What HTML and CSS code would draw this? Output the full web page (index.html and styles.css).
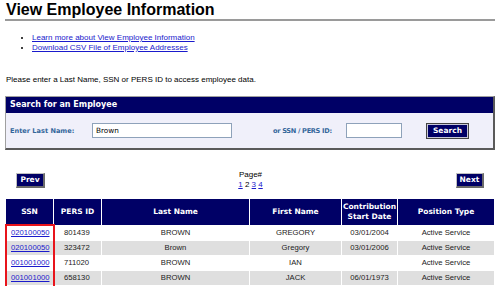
FILE: index.html
```html
<!DOCTYPE html>
<html lang="en">

<head>
    <meta charset="UTF-8">
    <title>View Employee Information</title>
    <link rel="stylesheet" href="styles.css">
</head>

<body>
    <!-- Page Title -->
    <h1 class="page-title">View Employee Information</h1>

    <!-- Help Links -->
    <ul class="help-links">
        <li><a href="#">Learn more about View Employee Information</a></li>
        <li><a href="#">Download CSV File of Employee Addresses</a></li>
    </ul>

    <p class="intro">Please enter a Last Name, SSN or PERS ID to access employee data.</p>

    <!-- Search Box -->
    <div class="search-box">
        <div class="search-header">Search for an Employee</div>
        <div class="search-body">
            <label class="search-label label-name" for="last-name">Enter Last Name:</label>
            <input class="search-input input-name" id="last-name" type="text" value="Brown">
            <label class="search-label label-id" for="pers-id">or SSN / PERS ID:</label>
            <input class="search-input input-id" id="pers-id" type="text">
            <button class="nav-btn search-btn">Search</button>
        </div>
    </div>

    <!-- Pager -->
    <div class="pager">
        <button class="nav-btn prev-btn">Prev</button>
        <div class="page-list">
            Page#<br>
            <a href="#">1</a> 2 <a href="#">3</a> <a href="#">4</a>
        </div>
        <button class="nav-btn next-btn">Next</button>
    </div>

    <!-- Results -->
    <div class="results">
        <table class="results-table">
            <thead>
                <tr>
                    <th class="col-ssn">SSN</th>
                    <th class="col-pers">PERS ID</th>
                    <th class="col-last">Last Name</th>
                    <th class="col-first">First Name</th>
                    <th class="col-date">Contribution<br>Start Date</th>
                    <th class="col-type">Position Type</th>
                </tr>
            </thead>
            <tbody>
                <tr>
                    <td class="cell-left"><a href="#">020100050</a></td>
                    <td class="cell-pers">801439</td>
                    <td>BROWN</td>
                    <td>GREGORY</td>
                    <td>03/01/2004</td>
                    <td>Active Service</td>
                </tr>
                <tr class="row-alt">
                    <td class="cell-left"><a href="#">020100050</a></td>
                    <td class="cell-pers">323472</td>
                    <td>Brown</td>
                    <td>Gregory</td>
                    <td>03/01/2006</td>
                    <td>Active Service</td>
                </tr>
                <tr>
                    <td class="cell-left"><a href="#">001001000</a></td>
                    <td class="cell-pers">711020</td>
                    <td>BROWN</td>
                    <td>IAN</td>
                    <td></td>
                    <td>Active Service</td>
                </tr>
                <tr class="row-alt">
                    <td class="cell-left"><a href="#">001001000</a></td>
                    <td class="cell-pers">658130</td>
                    <td>BROWN</td>
                    <td>JACK</td>
                    <td>06/01/1973</td>
                    <td>Active Service</td>
                </tr>
            </tbody>
        </table>
        <!-- SSN column highlight -->
        <div class="ssn-highlight"></div>
    </div>
</body>

</html>
```

FILE: styles.css
```css
body {
    margin: 0;
    padding: 0 5px;
    background-color: #ffffff;
    color: #000000;
    font-family: "Liberation Sans", Arial, sans-serif;
    font-size: 8px;
}

a {
    color: #1a1acc;
}

/* Title */
.page-title {
    margin: 0;
    padding: 1px 0 0 1px;
    font-size: 16px;
    line-height: 18px;
    font-weight: bold;
    border-bottom: 2px solid #9a9a9a;
}

/* Help Links */
.help-links {
    margin: 12px 0 0 0;
    padding-left: 27px;
    line-height: 10px;
}

.intro {
    margin: 22px 0 0 1px;
    line-height: 10px;
}

/* Search Box */
.search-box {
    margin-top: 11px;
    border: 1px solid #a0a0a0;
    border-right: 2px solid #5a5a5a;
    border-bottom: 2px solid #5a5a5a;
    background-color: #f0f0fa;
}

.search-header {
    height: 16px;
    padding-left: 4px;
    background-color: #000066;
    color: #ffffff;
    font-family: "DejaVu Sans", Verdana, sans-serif;
    font-size: 8px;
    font-weight: bold;
    line-height: 16px;
}

.search-body {
    display: flex;
    align-items: center;
    height: 35px;
    padding-left: 4px;
}

.search-label {
    color: #33669a;
    font-family: "DejaVu Sans", Verdana, sans-serif;
    font-size: 6.6px;
    font-weight: bold;
    white-space: nowrap;
}

.label-name {
    width: 82px;
}

.label-id {
    width: 73px;
    margin-left: 41px;
    letter-spacing: -0.3px;
}

.search-input {
    box-sizing: border-box;
    height: 15px;
    padding: 0 3px;
    border: 1px solid #8ea2ba;
    background-color: #ffffff;
    font-family: "DejaVu Sans", Verdana, sans-serif;
    font-size: 7.3px;
}

.input-name {
    width: 140px;
}

.input-id {
    width: 56px;
}

/* Buttons */
.nav-btn {
    box-sizing: border-box;
    height: 15px;
    padding: 0;
    border-style: solid;
    border-width: 1px 2px 2px 1px;
    border-color: #c0c0c0 #6a6a6a #6a6a6a #c0c0c0;
    background-color: #000066;
    color: #ffffff;
    font-family: "DejaVu Sans", Verdana, sans-serif;
    font-size: 7.5px;
    font-weight: bold;
    line-height: 12px;
}

.search-btn {
    width: 43px;
    height: 16px;
    margin-left: 24px;
    border: 1px solid #444444;
    box-shadow: inset 0 0 0 1px #c8c8d8;
}

.prev-btn {
    width: 29px;
}

.next-btn {
    width: 28px;
}

/* Pager */
.pager {
    display: flex;
    align-items: center;
    justify-content: space-between;
    height: 20px;
    margin-top: 20px;
    padding: 0 11px;
}

.page-list {
    text-align: center;
    line-height: 10px;
}

/* Results */
.results {
    position: relative;
    margin-top: 8px;
}

.results-table {
    width: 490px;
    border-collapse: separate;
    border-spacing: 1px;
    table-layout: fixed;
}

.results-table th {
    height: 26px;
    padding: 0;
    background-color: #000066;
    color: #ffffff;
    font-family: "DejaVu Sans", Verdana, sans-serif;
    font-size: 7.5px;
    font-weight: bold;
    line-height: 10.5px;
    text-align: center;
}

.col-ssn { width: 47px; }
.col-pers { width: 47px; }
.col-last { width: 147px; }
.col-first { width: 91px; }
.col-date { width: 55px; }
.col-type { width: 96px; }

.results-table td {
    height: 14px;
    padding: 0;
    color: #222222;
    font-size: 7.7px;
    line-height: 14px;
    text-align: center;
    white-space: nowrap;
}

.results-table .cell-left {
    padding-left: 5px;
    text-align: left;
}

.results-table .cell-pers {
    padding-left: 10px;
    text-align: left;
}

.row-alt td {
    background-color: #dfdfdf;
}

.ssn-highlight {
    position: absolute;
    top: 26px;
    left: 0;
    box-sizing: border-box;
    width: 50px;
    height: 66px;
    border: 2px solid #e8141b;
}
```
